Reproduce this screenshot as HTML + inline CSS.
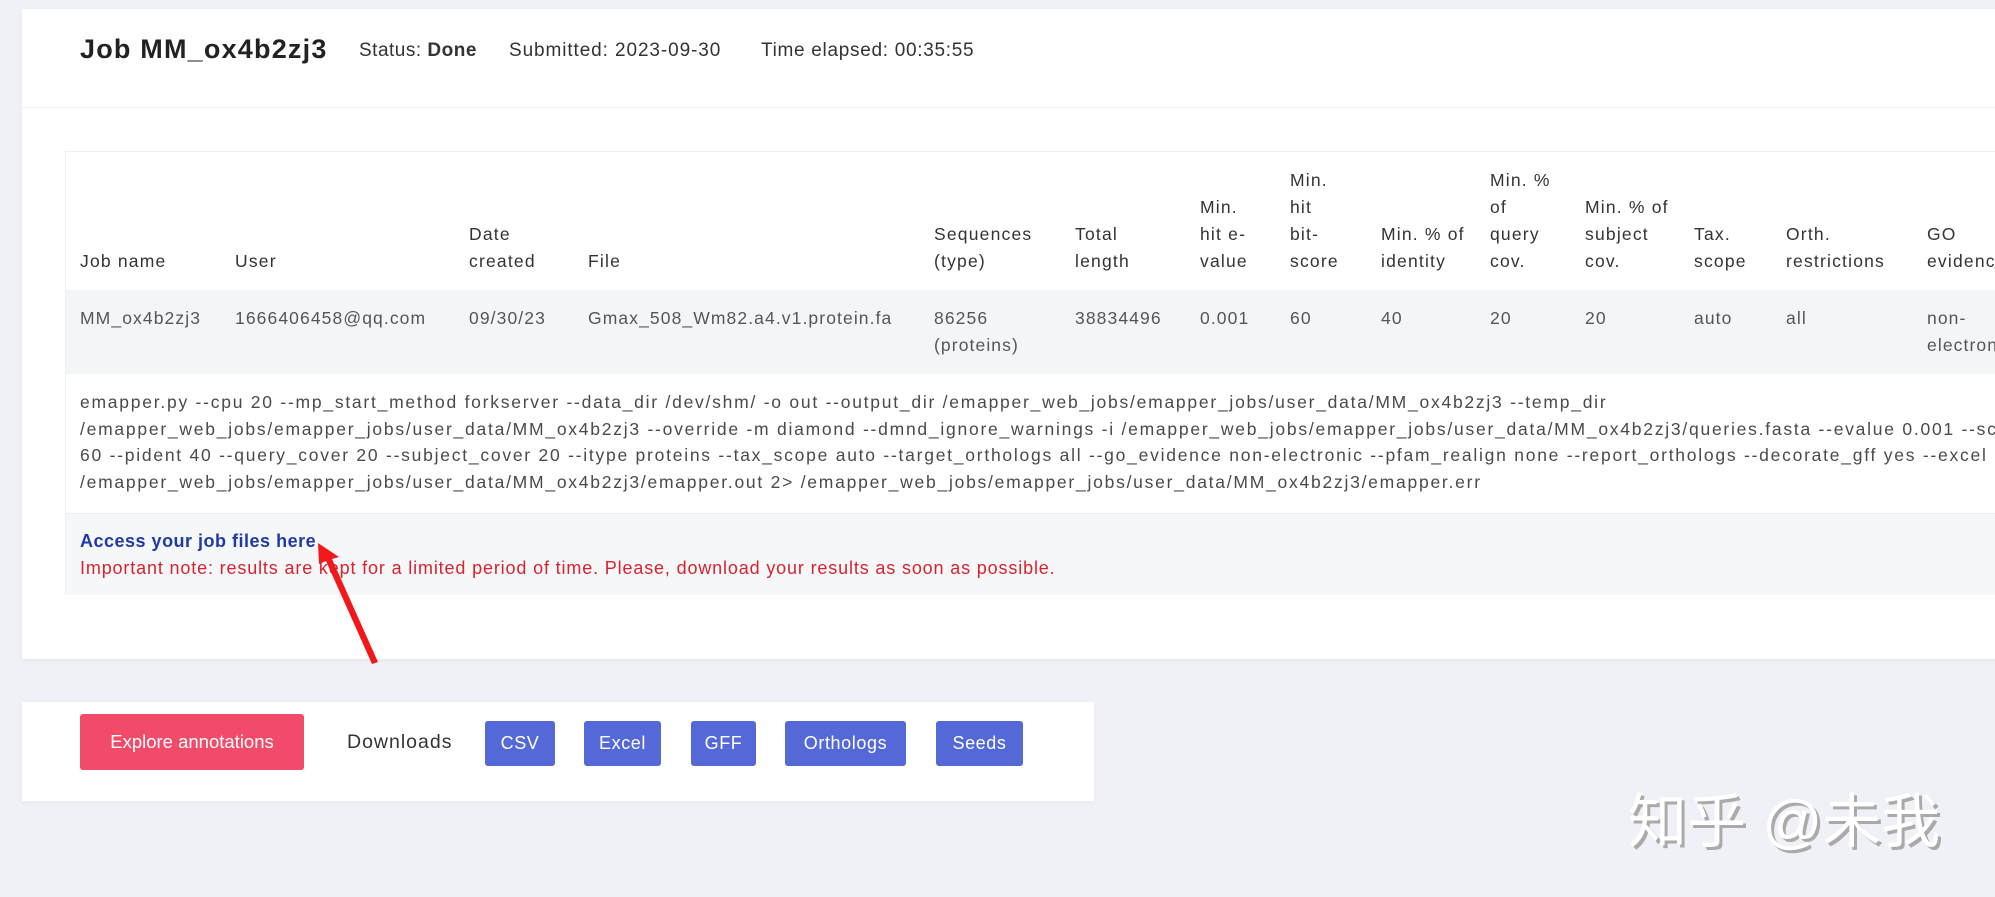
<!DOCTYPE html>
<html><head><meta charset="utf-8"><style>
*{margin:0;padding:0;box-sizing:border-box}
body{width:1995px;height:897px;background:#f0f1f6;font-family:"Liberation Sans",sans-serif;position:relative;overflow:hidden;color:#444}
.a{position:absolute;white-space:nowrap}
.card{position:absolute;background:#fff;box-shadow:0 2px 6px rgba(0,0,0,.04)}
.h{font-size:17.5px;color:#333;line-height:27px;letter-spacing:1.2px}
.d{font-size:17.5px;color:#555;line-height:27px;letter-spacing:1.1px}
.btn{position:absolute;background:#5468d8;color:#fff;font-size:18px;border-radius:3px;display:flex;align-items:center;justify-content:center;letter-spacing:0.6px}
</style></head><body>
<div class="card" style="left:22px;top:9px;width:1990px;height:650px"></div>
<div class="a" style="left:22px;top:107px;width:1973px;height:1px;background:#eceef2"></div>
<div class="a" style="left:80px;top:34px;font-size:27px;font-weight:bold;color:#222;letter-spacing:1.2px">Job MM_ox4b2zj3</div>
<div class="a" style="left:359px;top:40px;font-size:19px;color:#333;letter-spacing:0.5px">Status: <b>Done</b></div>
<div class="a" style="left:509px;top:40px;font-size:19px;color:#333;letter-spacing:0.9px">Submitted: 2023-09-30</div>
<div class="a" style="left:761px;top:40px;font-size:19px;color:#333;letter-spacing:0.7px">Time elapsed: 00:35:55</div>

<div class="a" style="left:65px;top:151px;width:1930px;height:444px;border:1px solid #eef0f3;border-right:none"></div>
<div class="a" style="left:66px;top:290px;width:1929px;height:84px;background:#f4f5f8"></div>
<div class="a" style="left:66px;top:513px;width:1929px;height:82px;background:#f6f7f9;border-top:1px solid #eceef2"></div>

<div class="a h" style="left:80px;top:248px">Job name</div>
<div class="a h" style="left:235px;top:248px">User</div>
<div class="a h" style="left:469px;top:221px">Date<br>created</div>
<div class="a h" style="left:588px;top:248px">File</div>
<div class="a h" style="left:934px;top:221px">Sequences<br>(type)</div>
<div class="a h" style="left:1075px;top:221px">Total<br>length</div>
<div class="a h" style="left:1200px;top:194px">Min.<br>hit e-<br>value</div>
<div class="a h" style="left:1290px;top:167px">Min.<br>hit<br>bit-<br>score</div>
<div class="a h" style="left:1381px;top:221px">Min. % of<br>identity</div>
<div class="a h" style="left:1490px;top:167px">Min. %<br>of<br>query<br>cov.</div>
<div class="a h" style="left:1585px;top:194px">Min. % of<br>subject<br>cov.</div>
<div class="a h" style="left:1694px;top:221px">Tax.<br>scope</div>
<div class="a h" style="left:1786px;top:221px">Orth.<br>restrictions</div>
<div class="a h" style="left:1927px;top:221px">GO<br>evidence</div>

<div class="a d" style="left:80px;top:305px">MM_ox4b2zj3</div>
<div class="a d" style="left:235px;top:305px">1666406458@qq.com</div>
<div class="a d" style="left:469px;top:305px">09/30/23</div>
<div class="a d" style="left:588px;top:305px">Gmax_508_Wm82.a4.v1.protein.fa</div>
<div class="a d" style="left:934px;top:305px">86256<br>(proteins)</div>
<div class="a d" style="left:1075px;top:305px">38834496</div>
<div class="a d" style="left:1200px;top:305px">0.001</div>
<div class="a d" style="left:1290px;top:305px">60</div>
<div class="a d" style="left:1381px;top:305px">40</div>
<div class="a d" style="left:1490px;top:305px">20</div>
<div class="a d" style="left:1585px;top:305px">20</div>
<div class="a d" style="left:1694px;top:305px">auto</div>
<div class="a d" style="left:1786px;top:305px">all</div>
<div class="a d" style="left:1927px;top:305px">non-<br>electronic</div>

<div class="a d" style="left:80px;top:389px;line-height:26.7px;color:#4a4a4a;letter-spacing:1.75px">emapper.py --cpu 20 --mp_start_method forkserver --data_dir /dev/shm/ -o out --output_dir /emapper_web_jobs/emapper_jobs/user_data/MM_ox4b2zj3 --temp_dir<br>/emapper_web_jobs/emapper_jobs/user_data/MM_ox4b2zj3 --override -m diamond --dmnd_ignore_warnings -i /emapper_web_jobs/emapper_jobs/user_data/MM_ox4b2zj3/queries.fasta --evalue 0.001 --score<br>60 --pident 40 --query_cover 20 --subject_cover 20 --itype proteins --tax_scope auto --target_orthologs all --go_evidence non-electronic --pfam_realign none --report_orthologs --decorate_gff yes --excel &gt;<br>/emapper_web_jobs/emapper_jobs/user_data/MM_ox4b2zj3/emapper.out 2&gt; /emapper_web_jobs/emapper_jobs/user_data/MM_ox4b2zj3/emapper.err</div>

<div class="a" style="left:80px;top:531px;font-size:18px;font-weight:bold;color:#1f3aa6;letter-spacing:0.5px">Access your job files here</div>
<div class="a" style="left:80px;top:558px;font-size:18px;color:#d8232f;letter-spacing:0.85px">Important note: results are kept for a limited period of time. Please, download your results as soon as possible.</div>

<svg class="a" style="left:0;top:0" width="1995" height="897"><polygon points="318,543 339,557 332,559 378,662 372,664 326,561 319,564" fill="#f01818"/></svg>

<div class="card" style="left:22px;top:702px;width:1072px;height:99px"></div>
<div class="a" style="left:80px;top:714px;width:224px;height:56px;background:#f24b6a;border-radius:3px;color:#fff;font-size:18.5px;display:flex;align-items:center;justify-content:center">Explore annotations</div>
<div class="a" style="left:347px;top:731px;font-size:19.5px;color:#333;letter-spacing:1px">Downloads</div>
<div class="btn" style="left:485px;top:721px;width:70px;height:45px">CSV</div>
<div class="btn" style="left:584px;top:721px;width:77px;height:45px">Excel</div>
<div class="btn" style="left:691px;top:721px;width:65px;height:45px">GFF</div>
<div class="btn" style="left:785px;top:721px;width:121px;height:45px">Orthologs</div>
<div class="btn" style="left:936px;top:721px;width:87px;height:45px">Seeds</div>

<div class="a" style="left:1628px;top:774px;font-size:59px;color:#fff;text-shadow:3px 3px 0 #aaa;font-family:'Liberation Sans','Noto Sans CJK SC',sans-serif">知乎 @未我</div>
</body></html>
